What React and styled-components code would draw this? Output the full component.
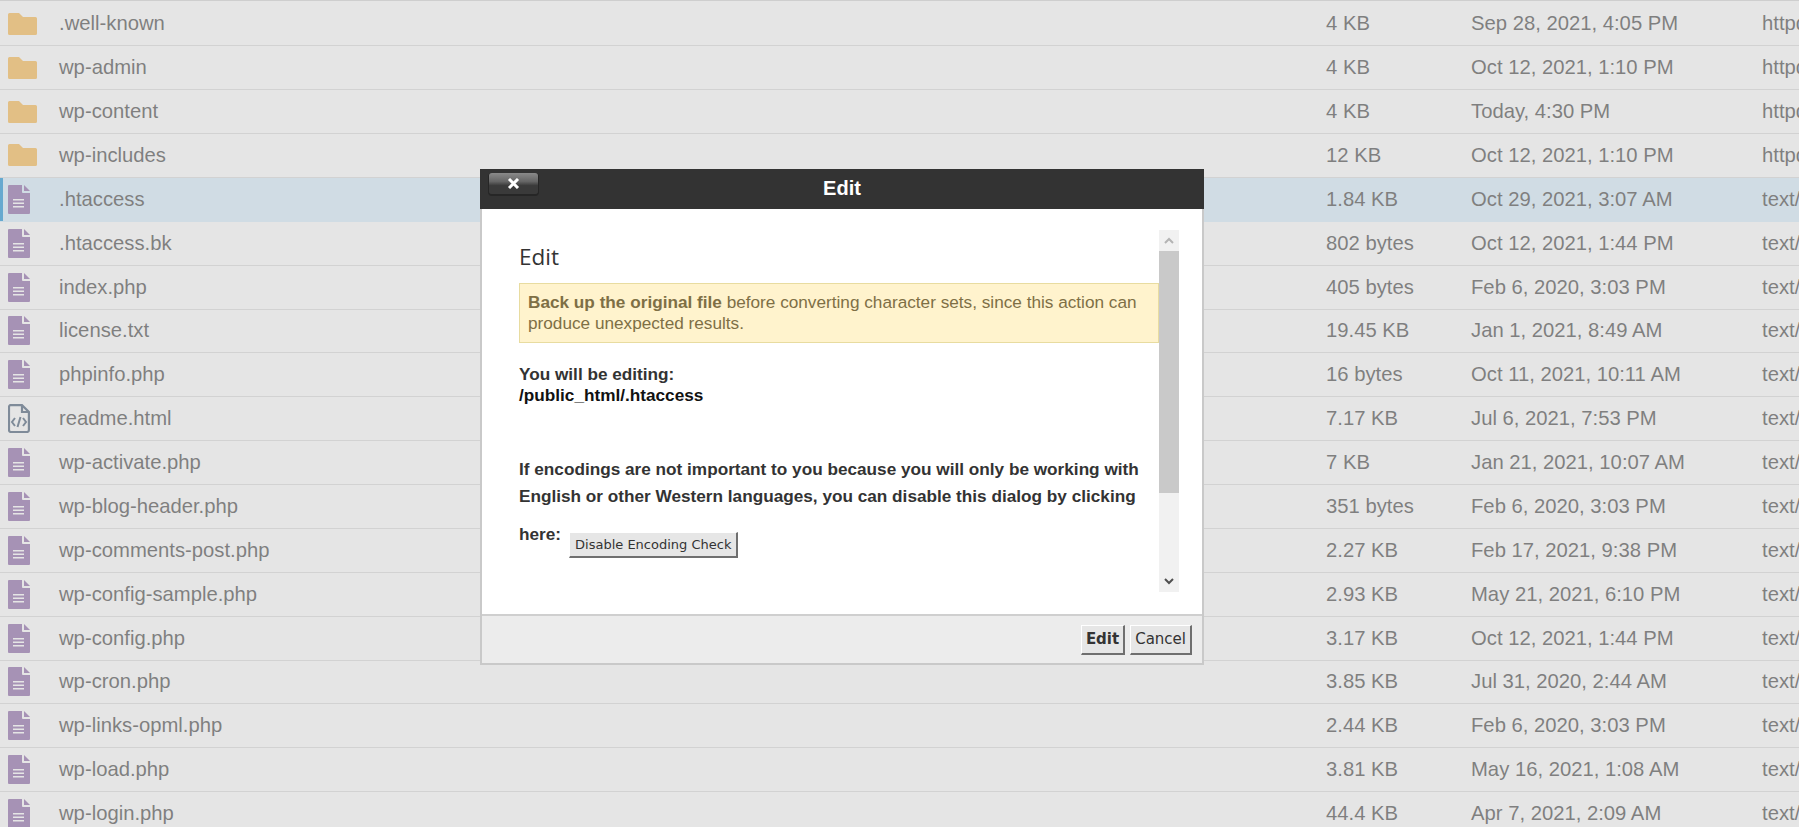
import React from 'react';
import styled, { createGlobalStyle } from 'styled-components';

const GlobalStyle = createGlobalStyle`
  html, body {
    margin: 0;
    padding: 0;
    height: 100%;
    overflow: hidden;
    background: #fff;
    font-family: "Liberation Sans", Arial, sans-serif;
  }
`;

const Page = styled.div`
  height: 827px;
  overflow: hidden;
  padding-top: 1.4px;
  box-sizing: border-box;
  border-top: 1px solid #d0d0d0;
`;

const Row = styled.div`
  display: grid;
  grid-template-columns: 59px 1267px 145px 291px 1fr;
  align-items: center;
  height: 43.89px;
  box-sizing: border-box;
  border-bottom: 1px solid ${p => (p.$selected ? '#d5edfd' : '#d8d8d8')};
  color: #333;
  font-size: 20.25px;
  white-space: nowrap;
  overflow: hidden;
  background: ${p => (p.$selected ? '#d5edfd' : '#fff')};
  box-shadow: ${p => (p.$selected ? 'inset 3px 0 0 #0087d3' : 'none')};
`;

const IconCell = styled.div`
  display: flex;
  align-items: center;
  padding-left: 8px;
`;

const Mask = styled.div`
  position: fixed;
  inset: 0;
  background: #cbcbcb;
  opacity: 0.5;
`;

const Dialog = styled.div`
  position: fixed;
  left: 480px;
  top: 169px;
  width: 724px;
  height: 496px;
  display: flex;
  flex-direction: column;
  box-sizing: border-box;
  background: #fff;
  border: solid #c9c9c9;
  border-width: 0 2px 2px 2px;
`;

const DialogHeader = styled.div`
  position: relative;
  margin: 0 -2px;
  height: 40px;
  padding-bottom: 2px;
  box-sizing: border-box;
  flex: none;
  display: flex;
  align-items: center;
  justify-content: center;
  background: #333;
  color: #fff;
  font-size: 20px;
  font-weight: bold;
`;

const CloseButton = styled.div`
  position: absolute;
  left: 9px;
  top: 4px;
  width: 49px;
  height: 21px;
  border-radius: 3px;
  display: flex;
  align-items: center;
  justify-content: center;
  background: linear-gradient(#8a8a8a, #666 40%, #3a3a3a 60%, #3a3a3a);
  box-shadow: 0 1px 0 1px #262626;
`;

const DialogBody = styled.div`
  flex: 1;
  display: flex;
  padding: 21px 23px 22px 37px;
  min-height: 0;
`;

const Content = styled.div`
  flex: 1;
  min-width: 0;
`;

const Heading = styled.div`
  font-family: "Open Sans", sans-serif;
  font-size: 22.5px;
  font-weight: 400;
  line-height: 30px;
  margin: 12px 0 11px;
  color: #333;
`;

const Notice = styled.div`
  box-sizing: border-box;
  height: 60px;
  padding: 8px 8px;
  background: #fff3cd;
  border: 1px solid #e8dca0;
  color: #7e6f45;
  font-size: 17.2px;
  line-height: 21px;
`;

const FileLabel = styled.div`
  margin-top: 21px;
  font-size: 17.2px;
  font-weight: bold;
  line-height: 20.5px;
  color: #333;
`;

const FilePath = styled.div`
  font-size: 17.2px;
  font-weight: bold;
  line-height: 20.5px;
  color: #111;
`;

const Explain = styled.div`
  margin-top: 51px;
  padding-right: 16px;
  font-size: 17.2px;
  font-weight: bold;
  line-height: 27px;
  color: #333;
`;

const HereLine = styled.div`
  display: flex;
  align-items: flex-start;
  gap: 8px;
  margin-top: 15px;
  font-size: 17.2px;
  font-weight: bold;
  color: #333;
  line-height: 18px;
`;

const Button = styled.div`
  box-sizing: border-box;
  display: flex;
  align-items: center;
  justify-content: center;
  height: 30px;
  padding: 0 4px;
  background: #e6e6e6;
  border: solid;
  border-color: #fff #6f6f6f #6f6f6f #fff;
  border-width: 1px 2px 2px 1px;
  font-family: "DejaVu Sans", sans-serif;
  font-size: 15px;
  font-weight: ${p => (p.$primary ? 'bold' : 'normal')};
  color: #333;
  white-space: nowrap;
`;

const InlineButton = styled(Button)`
  height: 26px;
  margin-top: 7px;
  padding: 0 5px;
  font-size: 13px;
`;

const ScrollBar = styled.div`
  flex: none;
  width: 20px;
  display: flex;
  flex-direction: column;
  background: #f1f1f1;
`;

const ScrollArrow = styled.div`
  flex: none;
  height: 21px;
  display: flex;
  align-items: center;
  justify-content: center;
`;

const ScrollThumb = styled.div`
  flex: none;
  height: 242px;
  background: #c9c9c9;
`;

const ScrollTrack = styled.div`
  flex: 1;
`;

const DialogFooter = styled.div`
  flex: none;
  height: 49px;
  display: flex;
  align-items: center;
  justify-content: flex-end;
  gap: 5px;
  padding-right: 10px;
  box-sizing: border-box;
  background: #ececec;
  border-top: 2px solid #cfcfcf;
`;

const FolderIcon = () => (
  <svg width="29" height="22" viewBox="0 0 29 22">
    <path d="M1.5 0H11l4 4h12.500A1.500 1.500 0 0 1 29 5.500V20.500A1.500 1.500 0 0 1 27.500 22H1.500A1.500 1.500 0 0 1 0 20.500V1.500A1.500 1.500 0 0 1 1.500 0Z" fill="#f9b33f" />
  </svg>
);

const FileIcon = () => (
  <svg width="22" height="29" viewBox="0 0 22 29">
    <path d="M0 1a1 1 0 0 1 1-1H14V7a1 1 0 0 0 1 1H22V28a1 1 0 0 1-1 1H1a1 1 0 0 1-1-1Z" fill="#81599f" />
    <path d="M16 0L22 6H16Z" fill="#81599f" />
    <rect x="5" y="14" width="11" height="1.500" fill="#fff" />
    <rect x="5" y="17.500" width="11" height="1.500" fill="#fff" />
    <rect x="5" y="21" width="11" height="1.500" fill="#fff" />
  </svg>
);

const CodeIcon = () => (
  <svg width="22" height="29" viewBox="0 0 22 29" fill="none" stroke="#334b67" strokeWidth="2.200">
    <path d="M3 1.100H14L20.900 8V26a2 2 0 0 1-2 2H3a2 2 0 0 1-2-2V3a2 2 0 0 1 2-2Z" />
    <path d="M14 1V8H21" />
    <path d="M7 14L4 18L7 22M15 14L18 18L15 22M12.500 13L9.500 23" strokeWidth="2" />
  </svg>
);

const CloseIcon = () => (
  <svg width="13" height="11" viewBox="0 0 13 11" fill="none" stroke="#fff" strokeWidth="3">
    <path d="M2 1L11 10M11 1L2 10" />
  </svg>
);

const Chevron = ({ up }) => (
  <svg width="10" height="7" viewBox="0 0 10 7" fill="none" stroke={up ? '#b4b4b4' : '#505050'} strokeWidth="2">
    <path d={up ? 'M1 6L5 2L9 6' : 'M1 1L5 5L9 1'} />
  </svg>
);

const files = [
  ['.well-known', 'folder', '4 KB', 'Sep 28, 2021, 4:05 PM', 'httpd/unix-directory'],
  ['wp-admin', 'folder', '4 KB', 'Oct 12, 2021, 1:10 PM', 'httpd/unix-directory'],
  ['wp-content', 'folder', '4 KB', 'Today, 4:30 PM', 'httpd/unix-directory'],
  ['wp-includes', 'folder', '12 KB', 'Oct 12, 2021, 1:10 PM', 'httpd/unix-directory'],
  ['.htaccess', 'file', '1.84 KB', 'Oct 29, 2021, 3:07 AM', 'text/x-generic', true],
  ['.htaccess.bk', 'file', '802 bytes', 'Oct 12, 2021, 1:44 PM', 'text/x-generic'],
  ['index.php', 'file', '405 bytes', 'Feb 6, 2020, 3:03 PM', 'text/x-generic'],
  ['license.txt', 'file', '19.45 KB', 'Jan 1, 2021, 8:49 AM', 'text/plain'],
  ['phpinfo.php', 'file', '16 bytes', 'Oct 11, 2021, 10:11 AM', 'text/x-generic'],
  ['readme.html', 'code', '7.17 KB', 'Jul 6, 2021, 7:53 PM', 'text/html'],
  ['wp-activate.php', 'file', '7 KB', 'Jan 21, 2021, 10:07 AM', 'text/x-generic'],
  ['wp-blog-header.php', 'file', '351 bytes', 'Feb 6, 2020, 3:03 PM', 'text/x-generic'],
  ['wp-comments-post.php', 'file', '2.27 KB', 'Feb 17, 2021, 9:38 PM', 'text/x-generic'],
  ['wp-config-sample.php', 'file', '2.93 KB', 'May 21, 2021, 6:10 PM', 'text/x-generic'],
  ['wp-config.php', 'file', '3.17 KB', 'Oct 12, 2021, 1:44 PM', 'text/x-generic'],
  ['wp-cron.php', 'file', '3.85 KB', 'Jul 31, 2020, 2:44 AM', 'text/x-generic'],
  ['wp-links-opml.php', 'file', '2.44 KB', 'Feb 6, 2020, 3:03 PM', 'text/x-generic'],
  ['wp-load.php', 'file', '3.81 KB', 'May 16, 2021, 1:08 AM', 'text/x-generic'],
  ['wp-login.php', 'file', '44.4 KB', 'Apr 7, 2021, 2:09 AM', 'text/x-generic'],
];

const icons = { folder: FolderIcon, file: FileIcon, code: CodeIcon };

const App = () => (
  <>
    <GlobalStyle />
    <Page>
      {files.map(([name, kind, size, date, type, selected]) => {
        const Icon = icons[kind];
        return (
          <Row key={name} $selected={selected}>
            <IconCell><Icon /></IconCell>
            <div>{name}</div>
            <div>{size}</div>
            <div>{date}</div>
            <div>{type}</div>
          </Row>
        );
      })}
    </Page>
    <Mask />
    <Dialog>
      <DialogHeader>
        <CloseButton><CloseIcon /></CloseButton>
        Edit
      </DialogHeader>
      <DialogBody>
        <Content>
          <Heading>Edit</Heading>
          <Notice>
            <b>Back up the original file</b> before converting character sets, since this action can produce unexpected results.
          </Notice>
          <FileLabel>You will be editing:</FileLabel>
          <FilePath>/public_html/.htaccess</FilePath>
          <Explain>If encodings are not important to you because you will only be working with English or other Western languages, you can disable this dialog by clicking</Explain>
          <HereLine>
            here:
            <InlineButton>Disable Encoding Check</InlineButton>
          </HereLine>
        </Content>
        <ScrollBar>
          <ScrollArrow><Chevron up /></ScrollArrow>
          <ScrollThumb />
          <ScrollTrack />
          <ScrollArrow><Chevron /></ScrollArrow>
        </ScrollBar>
      </DialogBody>
      <DialogFooter>
        <Button $primary>Edit</Button>
        <Button>Cancel</Button>
      </DialogFooter>
    </Dialog>
  </>
);

export default App;
